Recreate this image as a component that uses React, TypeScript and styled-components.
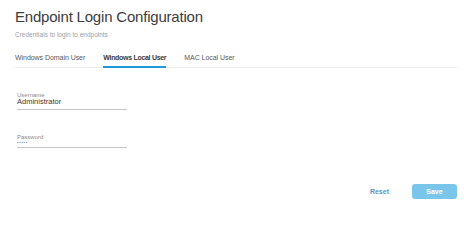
import React from "react";
import styled, { createGlobalStyle } from "styled-components";

const Global = createGlobalStyle`
  html, body { margin: 0; padding: 0; background: #ffffff; }
  body { font-family: "Liberation Sans", Arial, sans-serif; color: #39393b; }
  * { box-sizing: border-box; }
`;

const Page = styled.div`
  width: 474px;
  height: 221px;
  padding: 7px 17px 0 15px;
  display: flex;
  flex-direction: column;
`;

const Title = styled.h1`
  margin: 0;
  font-size: 15px;
  line-height: 19px;
  font-weight: 400;
  color: #3c3c3e;
  letter-spacing: -0.2px;
`;

const Subtitle = styled.p`
  margin: 4px 0 0 0;
  font-size: 6.5px;
  line-height: 9px;
  color: #9e9ea2;
`;

const TabBar = styled.div`
  margin-top: 12px;
  display: flex;
  gap: 18px;
  border-bottom: 1px solid #ededed;
`;

const Tab = styled.div<{ $active?: boolean }>`
  font-size: 7px;
  line-height: 9px;
  padding: 2px 0 4px;
  font-weight: ${(p) => (p.$active ? 700 : 400)};
  letter-spacing: ${(p) => (p.$active ? "-0.3px" : "-0.05px")};
  color: ${(p) => (p.$active ? "#39393b" : "#58585b")};
  border-bottom: 2px solid ${(p) => (p.$active ? "#1e9bd7" : "transparent")};
  margin-bottom: -1px;
`;

const Form = styled.div`
  margin-top: 24px;
  display: flex;
  flex-direction: column;
  gap: 24px;
  width: 110px;
  margin-left: 2px;
`;

const Field = styled.div`
  display: flex;
  flex-direction: column;
  border-bottom: 1px solid #c6c7ca;
  padding-bottom: 2px;
`;

const Label = styled.span`
  font-size: 6px;
  line-height: 6px;
  color: #8b8b8e;
`;

const Value = styled.span<{ $dots?: boolean }>`
  font-size: ${(p) => (p.$dots ? "4px" : "7.5px")};
  line-height: ${(p) => (p.$dots ? "5px" : "7px")};
  margin-bottom: ${(p) => (p.$dots ? "0" : "2px")};
  color: ${(p) => (p.$dots ? "#6a6a6d" : "#39393b")};
  letter-spacing: ${(p) => (p.$dots ? "0.8px" : "0")};
`;

const Footer = styled.div`
  margin-top: 36px;
  display: flex;
  justify-content: flex-end;
  align-items: center;
  gap: 23px;
`;

const ResetButton = styled.button`
  border: none;
  background: none;
  padding: 0;
  font-family: inherit;
  font-size: 7px;
  font-weight: 700;
  color: #5f93c6;
  cursor: pointer;
`;

const SaveButton = styled.button`
  border: none;
  width: 45px;
  height: 15px;
  border-radius: 3px;
  background: #7ac6ea;
  color: #ffffff;
  font-family: inherit;
  font-size: 7px;
  font-weight: 700;
  padding: 0;
`;

export default function App() {
  return (
    <>
      <Global />
      <Page>
        <Title>Endpoint Login Configuration</Title>
        <Subtitle>Credentials to login to endpoints</Subtitle>
        <TabBar>
          <Tab>Windows Domain User</Tab>
          <Tab $active>Windows Local User</Tab>
          <Tab>MAC Local User</Tab>
        </TabBar>
        <Form>
          <Field>
            <Label>Username</Label>
            <Value>Administrator</Value>
          </Field>
          <Field>
            <Label>Password</Label>
            <Value $dots>•••••</Value>
          </Field>
        </Form>
        <Footer>
          <ResetButton>Reset</ResetButton>
          <SaveButton>Save</SaveButton>
        </Footer>
      </Page>
    </>
  );
}
